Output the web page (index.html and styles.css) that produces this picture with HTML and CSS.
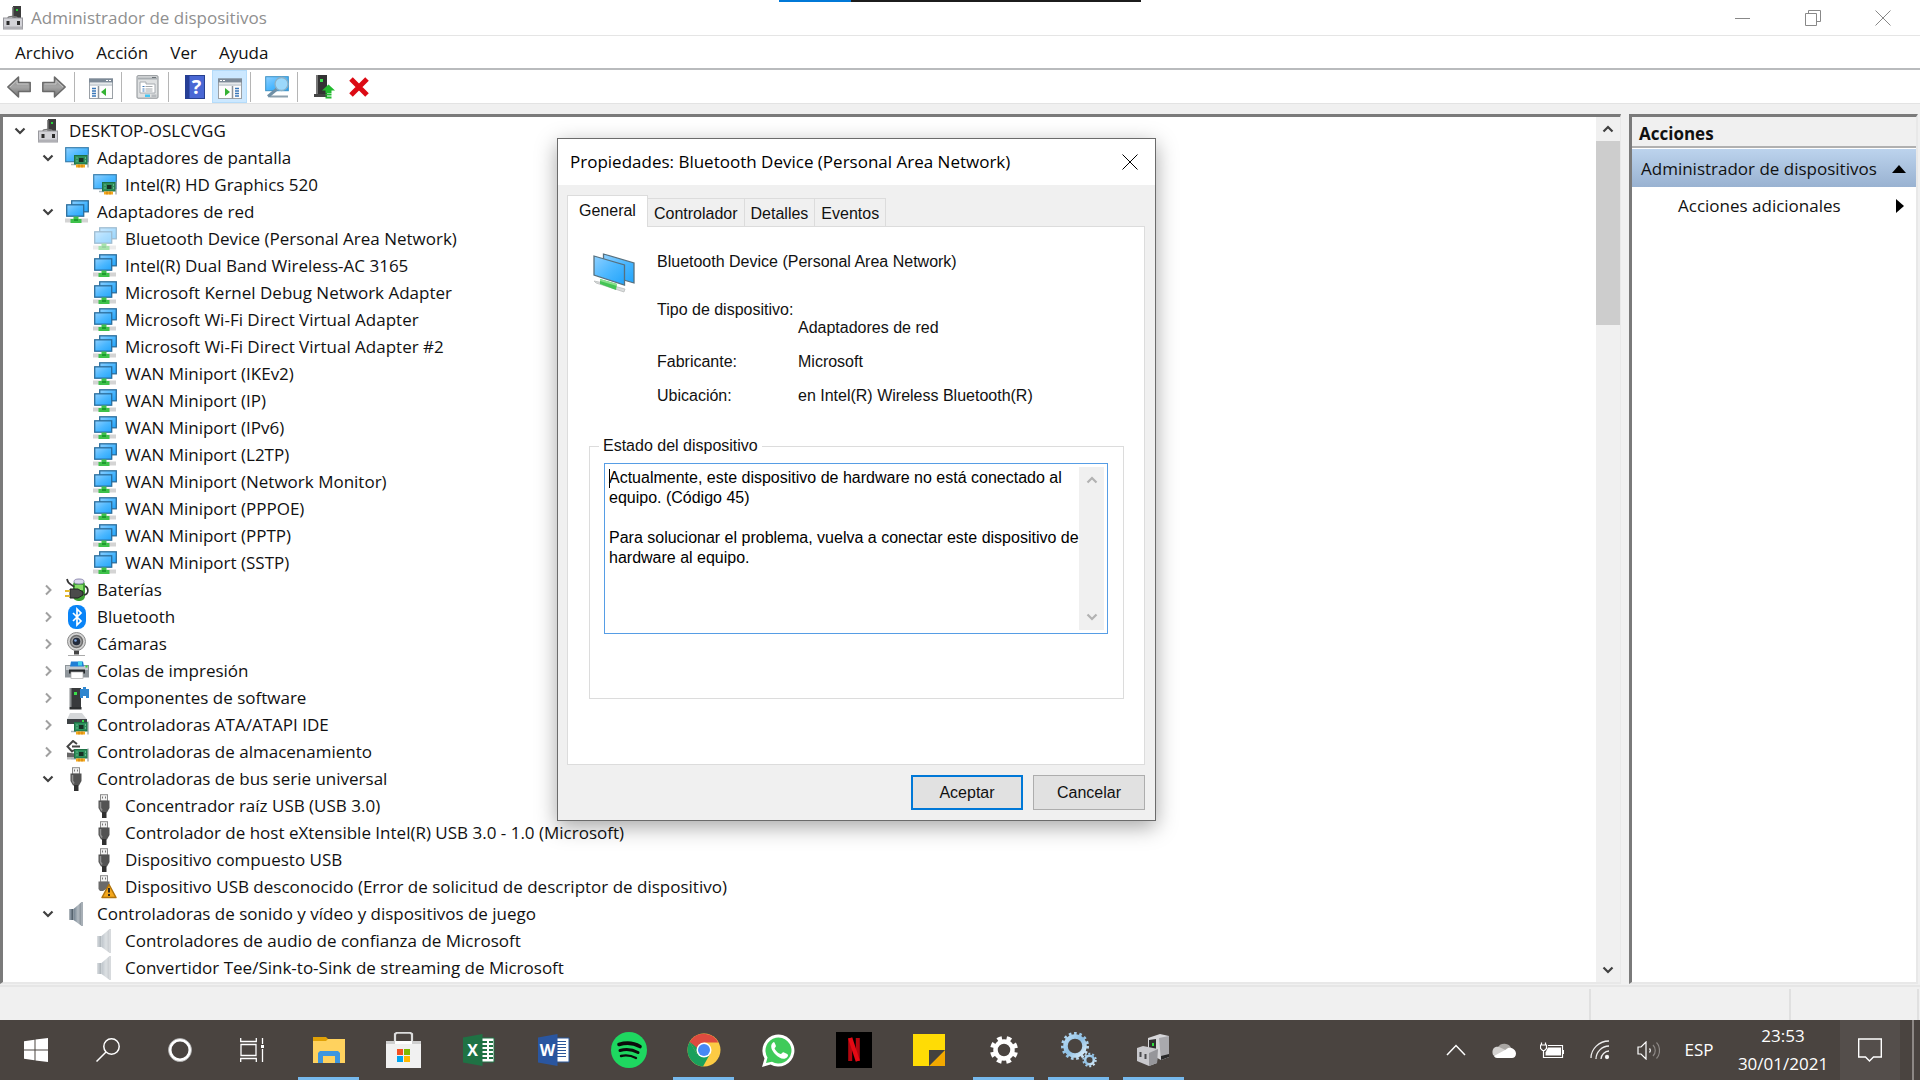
FILE: index.html
```html
<!DOCTYPE html>
<html lang="es">
<head>
  <meta charset="utf-8" />
  <meta name="viewport" content="width=device-width, initial-scale=1" />
  <title>Administrador de dispositivos</title>
  <link rel="stylesheet" href="styles.css">
</head>
<body>

  <!-- icon sprite -->
  <svg class="sprite" aria-hidden="true">
    <defs>
      <linearGradient id="g-blue" x1="0" y1="0" x2="1" y2="1">
        <stop offset="0" stop-color="#8fd0ff"/><stop offset=".5" stop-color="#4db8ff"/><stop offset="1" stop-color="#22a4fb"/>
      </linearGradient>
      <linearGradient id="g-gray" x1="0" y1="0" x2="0" y2="1">
        <stop offset="0" stop-color="#8d8d8d"/><stop offset=".5" stop-color="#a5a5a5"/><stop offset="1" stop-color="#6f6f6f"/>
      </linearGradient>
      <linearGradient id="g-spk" x1="0" y1="0" x2="1" y2="0">
        <stop offset="0" stop-color="#6f7f8d"/><stop offset=".6" stop-color="#b3bbc2"/><stop offset="1" stop-color="#8b949c"/>
      </linearGradient>
      <linearGradient id="g-gear" x1="0" y1="0" x2="1" y2="1">
        <stop offset="0" stop-color="#b9dcf5"/><stop offset=".5" stop-color="#8dbfe4"/><stop offset="1" stop-color="#dff0fb"/>
      </linearGradient>

      <symbol id="down" viewBox="0 0 18 18"><path d="M4.500 6.500l4.500 4.500 4.500-4.500" fill="none" stroke="#404040" stroke-width="2.200"/></symbol>
      <symbol id="right" viewBox="0 0 18 18"><path d="M7 4.500l4.500 4.500L7 13.500" fill="none" stroke="#a0a0a0" stroke-width="2"/></symbol>

      <symbol id="card" viewBox="0 0 24 24">
        <path d="M23 8.500v13" stroke="#9aa3a8" stroke-width="1.300"/>
        <path d="M6 18.500h5" stroke="#a9b4ba" stroke-width="1.500"/>
        <rect x="9.500" y="9.500" width="12.500" height="8.500" fill="#2e8f5c" stroke="#1d7144"/>
        <rect x="14" y="12" width="4.500" height="4" fill="#183024"/>
        <path d="M11.500 12h1M11.500 15h1M20 12h1M20 15h1" stroke="#9fe0b8"/>
        <rect x="11" y="18.500" width="9" height="3" fill="#f5a81c"/>
        <path d="M14 18.500v3M17 18.500v3" stroke="#c97d08"/>
      </symbol>

      <symbol id="computer" viewBox="0 0 24 24">
        <rect x="11" y="0" width="8" height="12" fill="#3b3b3b"/>
        <rect x="10" y="1" width="1.500" height="11" fill="#8a8a8a"/>
        <rect x="14" y="3" width="2" height="2" fill="#27d43a"/>
        <path d="M6 12c0-2 9-2 9 0" fill="none" stroke="#777" stroke-width="1.500"/>
        <rect x="1.500" y="12" width="19" height="11" fill="#d2d2d7" stroke="#98989d"/>
        <rect x="1.500" y="20.500" width="19" height="2.500" fill="#b0b0b5"/>
        <rect x="4.500" y="15" width="3" height="4" fill="#2b2b2b"/><rect x="15" y="15" width="3" height="4" fill="#2b2b2b"/>
      </symbol>

      <symbol id="display" viewBox="0 0 24 24">
        <rect x=".7" y="1.700" width="22.600" height="14" fill="url(#g-blue)" stroke="#3a7fae" stroke-width="1.200"/>
        <use href="#card"/>
      </symbol>

      <symbol id="net" viewBox="0 0 24 24">
        <rect x="6.700" y=".8" width="16.600" height="11" fill="url(#g-blue)" stroke="#2b6d9c" stroke-width="1.300"/>
        <rect x="1.700" y="4.800" width="17" height="11.400" fill="url(#g-blue)" stroke="#2b6d9c" stroke-width="1.300"/>
        <rect x="0" y="18.500" width="23" height="4" fill="#d4d4d4"/>
        <path d="M8.500 16.500h5v2.500h3v4h-11v-4h3z" fill="#3ec24a"/>
        <rect x="9" y="19" width="4" height="2" fill="#1f9a30"/>
      </symbol>

      <symbol id="battery" viewBox="0 0 24 24">
        <rect x="8" y="2" width="12" height="21" rx="5" fill="#3f9e35"/>
        <ellipse cx="14" cy="3.500" rx="5" ry="2.500" fill="#dcd9ee" stroke="#8f8cb0"/>
        <path d="M10 7h8v5h-8z" fill="#86dd66"/>
        <path d="M2 1c1 6 5 5 7 8M20 8c4 2 4 8-1 9" fill="none" stroke="#333" stroke-width="1.600"/>
        <path d="M5 11h8l5 3v3l-5 3H5z" fill="#4b4b4b" stroke="#222"/>
        <path d="M0 13h5M0 18h5" stroke="#e3b72d" stroke-width="2"/>
      </symbol>

      <symbol id="bluetooth" viewBox="0 0 24 24">
        <rect x="3" y="0" width="18" height="24" rx="8" fill="#0a84f7"/>
        <path d="M8 8l8 8-4 4V4l4 4-8 8" fill="none" stroke="#fff" stroke-width="1.700"/>
      </symbol>

      <symbol id="camera" viewBox="0 0 24 24">
        <path d="M3 23.500h17" stroke="#aaa"/><path d="M9 20.500h5" stroke="#444" stroke-width="4"/>
        <circle cx="11.500" cy="9.500" r="9" fill="#d4d4d4" stroke="#8a8a8a"/>
        <circle cx="11.500" cy="9.500" r="6" fill="#a5a5a5" stroke="#6d6d6d" stroke-width="1.500"/>
        <circle cx="11.500" cy="9.500" r="3.800" fill="#222a3a"/><circle cx="10.500" cy="8.500" r="1.300" fill="#7ea4dc"/>
      </symbol>

      <symbol id="printer" viewBox="0 0 24 24">
        <path d="M0 6h24v12.500H0z" fill="#8e959a"/>
        <rect x="1" y="7" width="22" height="4" fill="#c4c9cd"/>
        <path d="M6 2.500h12l1 5H5z" fill="#1f7fd6"/><path d="M13 2.500h4v4h-4z" fill="#43d2e8"/>
        <rect x="4" y="10.500" width="16" height="4" fill="#24282b"/><rect x="6" y="13" width="12" height="6.500" fill="#fff" stroke="#aaa" stroke-width=".7"/>
        <rect x="20.500" y="6.500" width="2" height="2" fill="#35d33e"/>
      </symbol>

      <symbol id="software" viewBox="0 0 24 24">
        <rect x="5" y="2" width="11" height="19" fill="#383a3c"/><rect x="4.500" y="2" width="2" height="19" fill="#8a8e90"/>
        <rect x="4.500" y="21" width="12" height="2.500" fill="#2d2f30"/><rect x="9" y="6" width="3" height="3" fill="#3ae04a"/>
        <path d="M15 3h3V1h3v2h3v9h-3v-2h-3v2h-3z" fill="#2f86cf"/>
      </symbol>

      <symbol id="ata" viewBox="0 0 24 24">
        <path d="M5 0h12l5 6.500H2z" fill="#d5d7d9"/><rect x="2" y="6" width="20" height="5" fill="#3e4245"/>
        <rect x="17" y="7" width="2" height="2" fill="#3ae04a"/><use href="#card"/>
      </symbol>

      <symbol id="storage" viewBox="0 0 24 24">
        <path d="M12 4L8 1 2.500 6.500 7 11.500 9 10M7 6.500h8" fill="none" stroke="#444" stroke-width="2"/>
        <path d="M2 12.500l8 1v4H2z" fill="#666"/><path d="M2 17.500h9v2H2z" fill="#bbb"/><use href="#card"/>
      </symbol>

      <symbol id="usb" viewBox="0 0 24 24">
        <rect x="7.500" y=".7" width="7" height="6.500" fill="#f2f2f2" stroke="#8a8a8a"/>
        <path d="M9.500 2.500v2M12.500 2.500v2" stroke="#777"/>
        <path d="M5.500 6.500h11v7.500l-2.500 4.500H8l-2.500-4.500z" fill="#535353"/>
        <path d="M7.500 8v6l1.500 2.500" fill="none" stroke="#909090" stroke-width="1.500"/>
        <rect x="9" y="18" width="4.500" height="6" fill="#303030"/>
      </symbol>

      <symbol id="usbwarn" viewBox="0 0 24 24">
        <rect x="7.500" y=".7" width="7" height="6.500" fill="#f2f2f2" stroke="#8a8a8a"/>
        <path d="M9.500 2.500v2M12.500 2.500v2" stroke="#777"/>
        <path d="M5.500 6.500h11V12L10 16H7l-1.500-2z" fill="#6a6a6a"/>
        <path d="M16 9.500l7 13H9z" fill="#f4a81d" stroke="#b0740d" stroke-width="1.500" stroke-linejoin="round"/>
        <path d="M16 13v4.500M16 19v2" stroke="#222" stroke-width="1.800"/>
      </symbol>

      <symbol id="speaker" viewBox="0 0 24 24">
        <path d="M4.500 7h4v11h-4z" fill="#55636e"/><path d="M5 7h1.500v11H5z" fill="#8794a0"/>
        <path d="M8.500 7L16 .5v23L8.500 18z" fill="url(#g-spk)"/><path d="M16 0h2v24h-2z" fill="#a7afb6"/>
      </symbol>

      <symbol id="arrow" viewBox="0 0 24 24">
        <path d="M.8 12L11.500 2v5.500h11.700v9H11.500V22z" fill="url(#g-gray)" stroke="#6a6a6a" stroke-width="1.500" stroke-linejoin="round"/>
        <path d="M3 12l7-6.500V9h11.500" fill="none" stroke="#c6c6c6"/>
      </symbol>

      <symbol id="pane" viewBox="0 0 24 24">
        <rect x=".5" y="4" width="23" height="19.500" fill="#fdfdfd" stroke="#9aa0a6"/>
        <rect x="0" y="3.500" width="24" height="4" fill="#7d8a97"/>
        <path d="M17 5.500h2M20 5.500h2" stroke="#fff"/><rect x="1" y="8.500" width="22" height="2.500" fill="#cfd5da"/>
        <path d="M9.500 11v12.500" stroke="#8d949b" stroke-width="1.500"/>
        <path d="M3 13.500h4M3 16h4M3 18.500h4M3 21h4" stroke="#3a77b8" stroke-width="1.300"/>
        <path d="M12 17l5-4v8z" fill="#34b233"/>
      </symbol>

      <symbol id="props" viewBox="0 0 24 24">
        <rect x="1" y=".7" width="21" height="22.500" rx="1" fill="#dfe1e2" stroke="#8a8f93"/>
        <path d="M2 3.500h19" stroke="#a9aeb2" stroke-width="2"/><path d="M16 2.500h4" stroke="#6c7378"/>
        <path d="M4 7h6v2h9v9H4z" fill="#fff" stroke="#a6abb0"/>
        <path d="M6.500 11.500h2M6.500 14h2M6.500 16h2" stroke="#3a77b8" stroke-width="1.200"/><path d="M9.500 11.500h7M9.500 14h7M9.500 16h7" stroke="#a2a7ab"/>
        <rect x="9" y="19.500" width="5" height="2.500" fill="#44c5f3"/><rect x="15.500" y="19.500" width="5" height="2.500" fill="#b7bbbf"/>
      </symbol>

      <symbol id="help" viewBox="0 0 24 24">
        <rect x="2.500" y=".5" width="19" height="23" fill="#4a68d4" stroke="#27408f"/><rect x="2.500" y=".5" width="4" height="23" fill="#263f97"/>
        <text x="13.500" y="19" text-anchor="middle" class="t-help">?</text>
      </symbol>

      <symbol id="scan" viewBox="0 0 24 24">
        <rect x=".7" y="1.700" width="22.600" height="14" fill="url(#g-blue)" stroke="#3a8fc4"/>
        <path d="M5 21.500h18" stroke="#8da0ad" stroke-width="2"/>
        <path d="M12 14L3 21.500" stroke="#6f8fa5" stroke-width="3"/>
        <circle cx="16.500" cy="9" r="6.500" fill="#9bd8fb" stroke="#8bb0c6" stroke-width="1.300"/>
      </symbol>

      <symbol id="driver" viewBox="0 0 24 24">
        <rect x="4" y="0" width="11" height="19" fill="#333"/><rect x="4" y="0" width="2" height="19" fill="#777"/>
        <rect x="2" y="19" width="13" height="3" fill="#444"/><rect x="8" y="4" width="3" height="3" fill="#3ae04a"/>
        <path d="M16.500 9.500l6.500 6h-3.500V18h-6v-2.500H10z" fill="#22ba2e"/><path d="M13.500 19.500h6M13.500 22.500h6" stroke="#22ba2e" stroke-width="2"/>
      </symbol>

      <symbol id="cross" viewBox="0 0 24 24"><path d="M4 4l16 16M20 4L4 20" stroke="#dc0a14" stroke-width="5"/></symbol>
      <symbol id="close" viewBox="0 0 16 16"><path d="M.5.5l15 15M15.500.5l-15 15" stroke="currentColor" fill="none"/></symbol>
    </defs>
  </svg>

  <div class="window">
    <div class="dropmark"></div>

    <header class="titlebar">
      <svg class="ico"><use href="#computer"/></svg>
      <h1>Administrador de dispositivos</h1>
      <div class="caption">
        <button aria-label="Minimizar"><svg viewBox="0 0 16 16"><path d="M0 8.500h15" stroke="#888"/></svg></button>
        <button aria-label="Restaurar"><svg viewBox="0 0 16 16"><path d="M.5 3.500h11v12H.5zM3.500 3.500v-3h12v11h-4" fill="none" stroke="#888"/></svg></button>
        <button aria-label="Cerrar"><svg><use href="#close"/></svg></button>
      </div>
    </header>

    <nav class="menu">
      <button>Archivo</button>
      <button>Acción</button>
      <button>Ver</button>
      <button>Ayuda</button>
    </nav>

    <div class="toolbar">
      <button aria-label="Atrás"><svg class="ico"><use href="#arrow"/></svg></button>
      <button aria-label="Adelante"><svg class="ico flip"><use href="#arrow"/></svg></button>
      <i class="sep"></i>
      <button aria-label="Mostrar árbol"><svg class="ico"><use href="#pane"/></svg></button>
      <i class="sep"></i>
      <button aria-label="Propiedades"><svg class="ico"><use href="#props"/></svg></button>
      <i class="sep"></i>
      <button aria-label="Ayuda"><svg class="ico"><use href="#help"/></svg></button>
      <button class="on" aria-label="Panel de acciones"><svg class="ico flip"><use href="#pane"/></svg></button>
      <i class="sep"></i>
      <button aria-label="Buscar cambios de hardware"><svg class="ico"><use href="#scan"/></svg></button>
      <i class="sep"></i>
      <button aria-label="Actualizar controlador"><svg class="ico"><use href="#driver"/></svg></button>
      <button aria-label="Desinstalar dispositivo"><svg class="ico"><use href="#cross"/></svg></button>
    </div>

    <main class="panes">
      <section class="pane treepane">
        <ul class="tree">
          <li><div class="row"><svg class="chev"><use href="#down"/></svg><svg class="ico"><use href="#computer"/></svg>DESKTOP-OSLCVGG</div>
            <ul>
              <li><div class="row"><svg class="chev"><use href="#down"/></svg><svg class="ico"><use href="#display"/></svg>Adaptadores de pantalla</div>
                <ul>
                  <li class="row"><i class="chev"></i><svg class="ico"><use href="#display"/></svg>Intel(R) HD Graphics 520</li>
                </ul>
              </li>
              <li><div class="row"><svg class="chev"><use href="#down"/></svg><svg class="ico"><use href="#net"/></svg>Adaptadores de red</div>
                <ul>
                  <li class="row ghost"><i class="chev"></i><svg class="ico"><use href="#net"/></svg>Bluetooth Device (Personal Area Network)</li>
                  <li class="row"><i class="chev"></i><svg class="ico"><use href="#net"/></svg>Intel(R) Dual Band Wireless-AC 3165</li>
                  <li class="row"><i class="chev"></i><svg class="ico"><use href="#net"/></svg>Microsoft Kernel Debug Network Adapter</li>
                  <li class="row"><i class="chev"></i><svg class="ico"><use href="#net"/></svg>Microsoft Wi-Fi Direct Virtual Adapter</li>
                  <li class="row"><i class="chev"></i><svg class="ico"><use href="#net"/></svg>Microsoft Wi-Fi Direct Virtual Adapter #2</li>
                  <li class="row"><i class="chev"></i><svg class="ico"><use href="#net"/></svg>WAN Miniport (IKEv2)</li>
                  <li class="row"><i class="chev"></i><svg class="ico"><use href="#net"/></svg>WAN Miniport (IP)</li>
                  <li class="row"><i class="chev"></i><svg class="ico"><use href="#net"/></svg>WAN Miniport (IPv6)</li>
                  <li class="row"><i class="chev"></i><svg class="ico"><use href="#net"/></svg>WAN Miniport (L2TP)</li>
                  <li class="row"><i class="chev"></i><svg class="ico"><use href="#net"/></svg>WAN Miniport (Network Monitor)</li>
                  <li class="row"><i class="chev"></i><svg class="ico"><use href="#net"/></svg>WAN Miniport (PPPOE)</li>
                  <li class="row"><i class="chev"></i><svg class="ico"><use href="#net"/></svg>WAN Miniport (PPTP)</li>
                  <li class="row"><i class="chev"></i><svg class="ico"><use href="#net"/></svg>WAN Miniport (SSTP)</li>
                </ul>
              </li>
              <li class="row"><svg class="chev"><use href="#right"/></svg><svg class="ico"><use href="#battery"/></svg>Baterías</li>
              <li class="row"><svg class="chev"><use href="#right"/></svg><svg class="ico"><use href="#bluetooth"/></svg>Bluetooth</li>
              <li class="row"><svg class="chev"><use href="#right"/></svg><svg class="ico"><use href="#camera"/></svg>Cámaras</li>
              <li class="row"><svg class="chev"><use href="#right"/></svg><svg class="ico"><use href="#printer"/></svg>Colas de impresión</li>
              <li class="row"><svg class="chev"><use href="#right"/></svg><svg class="ico"><use href="#software"/></svg>Componentes de software</li>
              <li class="row"><svg class="chev"><use href="#right"/></svg><svg class="ico"><use href="#ata"/></svg>Controladoras ATA/ATAPI IDE</li>
              <li class="row"><svg class="chev"><use href="#right"/></svg><svg class="ico"><use href="#storage"/></svg>Controladoras de almacenamiento</li>
              <li><div class="row"><svg class="chev"><use href="#down"/></svg><svg class="ico"><use href="#usb"/></svg>Controladoras de bus serie universal</div>
                <ul>
                  <li class="row"><i class="chev"></i><svg class="ico"><use href="#usb"/></svg>Concentrador raíz USB (USB 3.0)</li>
                  <li class="row"><i class="chev"></i><svg class="ico"><use href="#usb"/></svg>Controlador de host eXtensible Intel(R) USB 3.0 - 1.0 (Microsoft)</li>
                  <li class="row"><i class="chev"></i><svg class="ico"><use href="#usb"/></svg>Dispositivo compuesto USB</li>
                  <li class="row"><i class="chev"></i><svg class="ico"><use href="#usbwarn"/></svg>Dispositivo USB desconocido (Error de solicitud de descriptor de dispositivo)</li>
                </ul>
              </li>
              <li><div class="row"><svg class="chev"><use href="#down"/></svg><svg class="ico"><use href="#speaker"/></svg>Controladoras de sonido y vídeo y dispositivos de juego</div>
                <ul>
                  <li class="row ghost"><i class="chev"></i><svg class="ico"><use href="#speaker"/></svg>Controladores de audio de confianza de Microsoft</li>
                  <li class="row ghost"><i class="chev"></i><svg class="ico"><use href="#speaker"/></svg>Convertidor Tee/Sink-to-Sink de streaming de Microsoft</li>
                </ul>
              </li>
            </ul>
          </li>
        </ul>
        <div class="scroll">
          <button aria-label="Subir"><svg class="chev up"><use href="#down"/></svg></button>
          <div class="track"><div class="thumb"></div></div>
          <button aria-label="Bajar"><svg class="chev"><use href="#down"/></svg></button>
        </div>
      </section>

      <aside class="pane actions">
        <h2>Acciones</h2>
        <button class="group">Administrador de dispositivos<svg width="14" height="8"><path d="M0 8l7-8 7 8z"/></svg></button>
        <button class="item">Acciones adicionales<svg width="8" height="14"><path d="M0 0l8 7-8 7z"/></svg></button>
      </aside>
    </main>

    <footer class="status"><span></span><span></span><span></span></footer>
  </div>

  <!-- properties dialog, floats over the main window -->
  <form class="dialog" role="dialog" aria-labelledby="dlgTitle" onsubmit="return false">
    <div class="dlg-title">
      <h2 id="dlgTitle">Propiedades: Bluetooth Device (Personal Area Network)</h2>
      <button type="button" aria-label="Cerrar"><svg><use href="#close"/></svg></button>
    </div>
    <div class="dlg-body">
      <div class="tabs" role="tablist">
        <button type="button" role="tab" aria-selected="true" class="sel">General</button>
        <button type="button" role="tab">Controlador</button>
        <button type="button" role="tab">Detalles</button>
        <button type="button" role="tab">Eventos</button>
      </div>
      <div class="page" role="tabpanel">
        <div class="info">
          <svg class="bigico" viewBox="0 0 42 40">
            <path d="M1 28l5 1 26 7-1 3-6-2-22-7z" fill="#d9dcdc" stroke="#b5b8b8" stroke-width=".7"/>
            <path d="M7 26l17 5-1 6-16-6z" fill="#45c455"/><path d="M7 26l17 5v2L7 28z" fill="#8ae08c"/>
            <path d="M10.500 1L41 10v20l-30.500-9z" fill="url(#g-blue)" stroke="#56707f" stroke-width="1.300"/>
            <path d="M1 3l30.500 9v20L1 22z" fill="url(#g-blue)" stroke="#56707f" stroke-width="1.300"/>
          </svg>
          <div>
            <p>Bluetooth Device (Personal Area Network)</p>
            <dl>
              <div class="stack"><dt>Tipo de dispositivo:</dt><dd>Adaptadores de red</dd></div>
              <div><dt>Fabricante:</dt><dd>Microsoft</dd></div>
              <div><dt>Ubicación:</dt><dd>en Intel(R) Wireless Bluetooth(R)</dd></div>
            </dl>
          </div>
        </div>
        <fieldset>
          <legend><label for="state">Estado del dispositivo</label></legend>
          <div class="box">
            <i class="caret"></i>
            <textarea id="state" readonly spellcheck="false">Actualmente, este dispositivo de hardware no está conectado al equipo. (Código 45)

Para solucionar el problema, vuelva a conectar este dispositivo de hardware al equipo.</textarea>
            <div class="boxscroll">
              <svg class="chev up"><use href="#down"/></svg>
              <svg class="chev"><use href="#down"/></svg>
            </div>
          </div>
        </fieldset>
      </div>
      <div class="dlg-buttons">
        <button class="push default">Aceptar</button>
        <button type="button" class="push">Cancelar</button>
      </div>
    </div>
  </form>

  <div class="taskbar">
    <div class="sys">
      <button aria-label="Inicio"><svg width="24" height="24" viewBox="0 0 24 24" fill="#fff"><path d="M0 3.200L10.500 1.800V11.500H0zM11.500 1.600L24 0v11.500H11.500zM0 12.500h10.500v9.700L0 20.800zM11.500 12.500H24V24l-12.500-1.600z"/></svg></button>
      <button aria-label="Buscar"><svg width="24" height="24" viewBox="0 0 24 24" fill="none" stroke="#fff" stroke-width="1.500"><circle cx="15.500" cy="8.500" r="7.700"/><path d="M10 14L.5 23.500"/></svg></button>
      <button aria-label="Cortana"><svg width="24" height="24" viewBox="0 0 24 24" fill="none"><circle cx="12" cy="12" r="10" stroke="#fff" stroke-width="3"/><circle cx="12" cy="12" r="11.500" stroke="#aaa" stroke-width=".8"/></svg></button>
      <button aria-label="Vista de tareas"><svg width="24" height="24" viewBox="0 0 24 24" fill="none" stroke="#fff" stroke-width="1.300"><path d="M1 6.500h15v11H1zM.7 0v3.500h15.600V0M.7 24v-3.500h15.600V24M22.500 0v6M22.500 11v13"/><path d="M21 7h3v3h-3z" fill="#fff" stroke="none"/></svg></button>
    </div>
    <div class="apps">
      <button class="run" aria-label="Explorador de archivos"><svg width="32" height="26" viewBox="0 0 32 26"><path d="M0 0h13l2 2v3H0z" fill="#e0a106"/><path d="M0 4h13l2-2h17v24H0z" fill="#ffd25e"/><path d="M5 26V16l2-2h18l2 2v10h-5v-7H10v7z" fill="#3d96df"/></svg></button>
      <button aria-label="Microsoft Store"><svg width="35" height="36" viewBox="0 0 35 36"><path d="M9 12V2l2-1.300h13L26 2v10" fill="none" stroke="#dcdcdc" stroke-width="2.200"/><path d="M0 9h35v27H0z" fill="#f1f1f1"/><path d="M0 9h35v3H0z" fill="#cfcfcf"/><path d="M9 9h17v3H9z" fill="#fff"/><path d="M11 17h6v6h-6z" fill="#f25022"/><path d="M18 17h6v6h-6z" fill="#7fba00"/><path d="M11 24h6v6h-6z" fill="#00a4ef"/><path d="M18 24h6v6h-6z" fill="#ffb900"/></svg></button>
      <button aria-label="Excel"><svg width="32" height="32" viewBox="0 0 32 32"><path d="M17 4h14v24H17z" fill="#fff" stroke="#1f7244"/><path d="M19 8h5M26 8h4M19 12h5M26 12h4M19 16h5M26 16h4M19 20h5M26 20h4M19 24h5M26 24h4" stroke="#1f7244" stroke-width="2"/><path d="M0 3.500L19.500 0v32L0 28.500z" fill="#1f7244"/><text x="9.500" y="22" text-anchor="middle" class="t-office">X</text></svg></button>
      <button aria-label="Word"><svg width="32" height="32" viewBox="0 0 32 32"><path d="M17 4h14v24H17z" fill="#fff" stroke="#2a5699"/><path d="M19 7.500h9M19 10.500h9M19 13.500h9M19 16.500h9M19 19.500h9M19 22.500h9" stroke="#2a5699" stroke-width="1.200"/><path d="M0 3.500L19.500 0v32L0 28.500z" fill="#2a56a0"/><text x="9.500" y="22" text-anchor="middle" class="t-office">W</text></svg></button>
      <button aria-label="Spotify"><svg width="36" height="36" viewBox="0 0 36 36" fill="none" stroke="#0c0c0c" stroke-linecap="round"><circle cx="18" cy="18" r="18" fill="#1ed760" stroke="none"/><path d="M8 12.500c7-2.200 15-1.500 21 2" stroke-width="3.600"/><path d="M9 18.500c6-1.700 12.500-1 18 2" stroke-width="3"/><path d="M10 24c5-1.200 10-.6 15 2" stroke-width="2.400"/></svg></button>
      <button class="run" aria-label="Chrome"><svg width="34" height="34" viewBox="0 0 34 34"><circle cx="17" cy="17" r="16.500" fill="#fccb44"/><path d="M2.700 8.700A16.500 16.500 0 0 0 16 33.500l7-12.500-13 0z" fill="#1aa05c"/><path d="M2.700 8.700A16.500 16.500 0 0 1 31.300 9.500H17L10 20z" fill="#de4b3f"/><path d="M2.700 8.700L10.500 22 17 24 9 14z" fill="#1aa05c"/><circle cx="17" cy="17" r="7.500" fill="#fff"/><circle cx="17" cy="17" r="6" fill="#4688f4"/></svg></button>
      <button aria-label="WhatsApp"><svg width="33" height="33" viewBox="0 0 33 33"><path d="M0 33l2.500-8.500A16 16 0 1 1 8.500 30.500z" fill="#fff"/><path d="M4 29l1.500-5.500a13 13 0 1 1 4.500 4.300z" fill="#3fcb5a"/><path d="M11 8.500c-3.500 3-1.500 8 2.500 12s9 6 12 2.200c1-1.500.5-2.200-.8-2.900l-2.700-1.400c-1-.4-1.400 0-2.100.9-.8 1-1.400 1-2.600.3-2-1-3.500-2.700-4.500-4.500-.5-1 .2-1.400.8-2.200.5-.7.3-1.200 0-2l-1-2.200c-.4-1-.9-1-1.600-.2z" fill="#fff"/></svg></button>
      <button aria-label="Netflix"><svg width="36" height="36" viewBox="0 0 36 36"><path d="M0 0h36v36H0z" fill="#000"/><path d="M14.200 6v23M21.800 6v23" stroke="#b1060f" stroke-width="4"/><path d="M14.200 6l7.600 23" stroke="#e50914" stroke-width="4.200"/></svg></button>
      <button aria-label="Notas rápidas"><svg width="32" height="32" viewBox="0 0 32 32"><path d="M0 0h32v16L16 32H0z" fill="#ffdc05"/><path d="M32 16v16H16z" fill="#f2a900"/><path d="M16 16h16L16 32z" fill="#43413e"/></svg></button>
      <button class="run" aria-label="Configuración"><svg width="28" height="28" viewBox="0 0 28 28"><circle cx="14" cy="14" r="8.500" fill="none" stroke="#fff" stroke-width="4.500"/><circle cx="14" cy="14" r="12" fill="none" stroke="#fff" stroke-width="4" stroke-dasharray="4.700 4.725" transform="rotate(11 14 14)"/></svg></button>
      <button class="run" aria-label="Servicios"><svg width="36" height="36" viewBox="0 0 36 36" fill="none" stroke="url(#g-gear)"><circle cx="14" cy="14" r="9.500" stroke-width="4.500"/><circle cx="14" cy="14" r="12.500" stroke-width="3" stroke-dasharray="2.600 2.636"/><circle cx="28.500" cy="28" r="4.300" stroke-width="2.500"/><circle cx="28.500" cy="28" r="6.200" stroke-width="2" stroke-dasharray="2 1.896"/></svg></button>
      <button class="run" aria-label="Administrador de dispositivos"><svg width="34" height="32" viewBox="0 0 34 32"><path d="M11 4L23 0l9 2v21l-8 3-13-7z" fill="#d7d7da"/><path d="M22 4l10-2v21l-8 3z" fill="#a9a9ad"/><path d="M12 6l7-1v13h-7z" fill="#303030"/><rect x="15" y="9" width="2" height="3" fill="#2edd3c"/><path d="M0 14l6-2 15 3-1 14-8 3-12-5z" fill="#c9c9cd"/><path d="M12 19l9-4-1 14-8 3z" fill="#96969a"/><path d="M3.500 18v5M8.500 20v5" stroke="#4a4a4d" stroke-width="2"/><path d="M24 26l8-3v-3l-8 2z" fill="#2a2a2a"/></svg></button>
    </div>

    <div class="tray">
      <button aria-label="Iconos ocultos"><svg width="20" height="12" viewBox="0 0 20 12" fill="none" stroke="#fff" stroke-width="1.500"><path d="M1 11l9-9.500L19 11"/></svg></button>
      <button aria-label="OneDrive"><svg width="24" height="16" viewBox="0 0 24 16"><path d="M6 5a7 6 0 0 1 13 1l-7 5z" fill="#a9a6a3"/><path d="M1 13C-1 7 3 4 7 5l11 5-4 5H4z" fill="#d3d1cf"/><path d="M2 14l12-6.500c3-4 10-1 10 4 0 3-2 4.500-4 4.500H5c-1.500 0-2.500-1-3-2z" fill="#fff"/></svg></button>
      <button aria-label="Batería"><svg width="24" height="17" viewBox="0 0 24 17" fill="none" stroke="#fff"><path d="M8 3.500h14.500v12H3.500V9M1.500.5v2M5.500.5v2M.5 3h6v3.500l-2 2h-2l-2-2z" stroke-width="1.200"/><path d="M8 5.500h13v8H5.500v-3z" fill="#fff" stroke="none"/><path d="M23.500 8v4"/></svg></button>
      <button aria-label="Red"><svg width="20" height="20" viewBox="0 0 20 20" fill="none" stroke="#eee" stroke-width="1.300"><path d="M1 18C1 9 9 1 19 1M6 19C6 12 12 6 19 6M11 19c0-4 4-8 8-8"/><circle cx="17" cy="17" r="1.500" fill="#fff"/></svg></button>
      <button aria-label="Volumen"><svg width="23" height="19" viewBox="0 0 23 19" fill="none" stroke="#fff" stroke-width="1.200"><path d="M1 6h3l5-5v17l-5-5H1z"/><path d="M12.500 7.500c1 1 1 3 0 4"/><path d="M16 4c3 3 3 8 0 11M19.500 1.500c4 4 4 12 0 16" stroke="#8d8885"/></svg></button>
      <button class="lang">ESP</button>
      <button class="clock"><time>23:53</time><time>30/01/2021</time></button>
      <button class="center" aria-label="Centro de actividades"><svg width="24" height="24" viewBox="0 0 24 24" fill="none" stroke="#fff" stroke-width="1.400"><path d="M.7 1h22.600v18H15.500L11.500 23l-4-4H.7z"/></svg></button>
      <button class="peek" aria-label="Mostrar escritorio"></button>
    </div>
  </div>

</body>
</html>
```

FILE: styles.css
```css
:root{
  --face: #f0f0f0;
  --line: #dcdcdc;
  --edge: #7a7a7a;
  --accent: #0078d7;
  --taskbar: #4a4440;
  --ui: "Open Sans", "Noto Sans", sans-serif;
  --dlg: "Liberation Sans", Arial, sans-serif;
}
*{ box-sizing: border-box; }
html, body{ height: 100%; }
body{
  margin: 0; display: flex; flex-direction: column; overflow: hidden;
  font-family: var(--ui); font-size: 17px; line-height: 24px; color: #111; background: var(--face);
}
h1, h2, p, dl, dd, ul{ margin: 0; padding: 0; font-size: inherit; font-weight: 400; }
ul{ list-style: none; }
button{ font: inherit; color: inherit; background: none; border: 0; padding: 0; display: flex; align-items: center; justify-content: center; }
svg{ display: block; flex: none; }
.sprite{ position: absolute; width: 0; height: 0; }
.ico{ width: 24px; height: 24px; flex: none; }
.chev{ width: 18px; height: 18px; flex: none; }
.up{ transform: scaleY(-1); }
.flip{ transform: scaleX(-1); }

/* main window */
.window{ flex: 1; min-height: 0; display: flex; flex-direction: column; }
.dropmark{
  position: absolute; top: 0; left: 779px; width: 362px; height: 2px;
  background: linear-gradient(90deg, var(--accent) 72px, #1c1c1c 72px);
}
.titlebar{ height: 36px; display: flex; align-items: center; gap: 5px; padding-left: 2px; background: #fff; border-bottom: 1px solid #e5e5e5; color: #8f8f8f; }
.caption{ margin-left: auto; display: flex; padding-right: 2px; }
.caption button{ width: 70px; height: 32px; color: #888; }
.caption svg{ width: 16px; height: 16px; }
.menu{ height: 34px; display: flex; align-items: center; gap: 22px; padding: 2px 0 0 15px; background: #fff; border-bottom: 2px solid #b9bbbd; }

.toolbar{ height: 33px; display: flex; align-items: center; padding-left: 1px; background: #fff; }
.toolbar button{ width: 35px; height: 33px; }
.toolbar .on{ background: #cce8ff; border: 1px solid #b5dcfa; }
.sep{ width: 1px; height: 30px; margin: 0 8px 0 3px; background: #b5b5b5; }

.panes{ flex: 1; min-height: 0; display: flex; gap: 8px; padding: 10px 2px 1px 0; border-top: 1px solid #e3e3e3; }
.pane{ background: #fff; border: 2px solid #e8e8e8; border-top: 3px solid var(--edge); border-left: 3px solid var(--edge); }
.treepane{ flex: 1; display: flex; overflow: hidden; border-right-width: 1px; }
.tree{ flex: 1; overflow: hidden; padding-left: 8px; }
.tree ul{ padding-left: 28px; }
.row{ height: 27px; display: flex; align-items: center; gap: 8px; white-space: nowrap; }
.ghost .ico{ opacity: .45; }

.scroll{ width: 24px; display: flex; flex-direction: column; background: var(--face); }
.scroll button{ height: 24px; }
.track{ flex: 1; }
.thumb{ height: 184px; background: #cdcdcd; }

.actions{ width: 289px; }
.actions h2{ height: 31px; padding: 5px 7px 0; font-weight: 700; background: var(--face); border-bottom: 2px solid #b0b0b0; }
.actions button{ width: 100%; height: 38px; justify-content: space-between; text-align: left; }
.actions .group{ margin-top: 1px; padding: 2px 10px 0 9px; background: linear-gradient(#bcd3ed, #99b2d1); }
.actions .item{ padding: 0 12px 0 46px; }

.status{ height: 35px; display: flex; border-top: 2px solid #e6e6e6; }
.status span{ border-right: 2px solid #e0e0e0; margin-top: 2px; flex: 0 0 200px; }
.status span:first-child{ flex: 1; }
.status span:last-child{ flex-basis: 128px; margin-right: 1px; }

/* dialog */
.dialog{
  position: absolute; left: 557px; top: 138px; width: 599px;
  background: var(--face); border: 1px solid #6b6b6b;
  box-shadow: 0 6px 20px rgba(0,0,0,.35);
  font-family: var(--dlg); font-size: 16px; line-height: 18px;
}
.dlg-title{ height: 46px; display: flex; align-items: center; justify-content: space-between; padding-left: 12px; background: #fff; font-family: var(--ui); font-size: 17px; color: #000; }
.dlg-title button{ width: 50px; height: 46px; }
.dlg-title svg{ width: 16px; height: 16px; }
.dlg-body{ padding: 10px 10px 10px 9px; }
.tabs{ display: flex; align-items: flex-end; }
.tabs button{ height: 28px; padding: 2px 6px 0; border: 1px solid var(--line); border-width: 1px 1px 0 0; }
.tabs .sel{ height: 32px; padding: 0 11px 2px; margin-bottom: -1px; border-left-width: 1px; background: #fff; }
.page{ padding: 26px 20px 65px 21px; background: #fff; border: 1px solid var(--line); }
.info{ display: flex; gap: 22px; padding-left: 4px; }
.bigico{ width: 42px; height: 40px; }
.info dl{ display: flex; flex-direction: column; gap: 16px; margin-top: 30px; }
.info dl div{ display: grid; grid-template-columns: 141px auto; }
.info .stack dd{ grid-area: 2 / 2; }

fieldset{ margin: 32px 0 0; padding: 8px 15px 64px 14px; border: 1px solid var(--line); min-width: 0; }
legend{ padding: 0 4px; margin-left: -5px; }
.box{ position: relative; display: flex; height: 171px; padding: 3px; border: 1px solid #569de5; }
.box textarea{
  flex: 1; min-width: 0; resize: none; border: 0; outline: 0; padding: 1px 0 1px 1px; overflow: hidden;
  font: inherit; line-height: 20px; color: #000; background: #fff;
}
.caret{ position: absolute; left: 4px; top: 5px; width: 1px; height: 19px; background: #000; }
.boxscroll{ width: 25px; display: flex; flex-direction: column; justify-content: space-between; align-items: center; padding: 4px 0; background: var(--face); }
.boxscroll svg{ opacity: .35; }

.dlg-buttons{ display: flex; justify-content: flex-end; gap: 10px; margin-top: 10px; }
.push{ width: 112px; height: 35px; background: #e1e1e1; border: 1px solid #adadad; }
.push.default{ border: 2px solid var(--accent); }

/* taskbar */
.taskbar{ height: 60px; display: flex; background: var(--taskbar); color: #fff; }
.sys, .apps, .tray{ display: flex; }
.sys button{ width: 72px; }
.apps{ margin-left: 3px; }
.apps button{ width: 75px; border: solid transparent; border-width: 3px 0; }
.apps .run{ background: linear-gradient(#76b9ed, #76b9ed) 50% 100% / 61px 3px no-repeat border-box; }
.tray{ margin-left: auto; }
.tray button{ width: 48px; }
.tray .lang{ width: 54px; }
.tray .clock{ width: 114px; flex-direction: column; gap: 4px; }
.tray .center{ width: 60px; background: #544e4b; }
.tray .peek{ width: 8px; margin-left: 12px; border-left: 2px solid #8d8885; }

.t-help{ font: 700 20px var(--ui); fill: #fff; }
.t-office{ font: 700 16px var(--ui); fill: #fff; }
```
